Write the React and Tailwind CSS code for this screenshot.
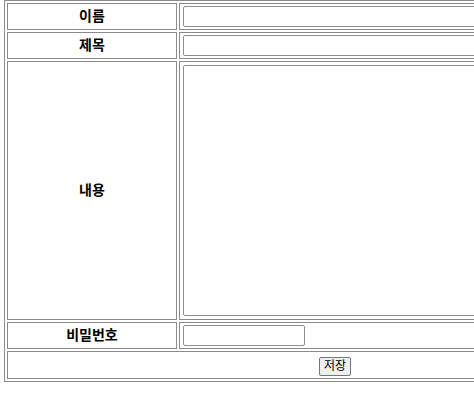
import React from 'react';

const font = { fontFamily: '"Liberation Sans", "Noto Sans CJK KR", sans-serif' };

const Label = ({ children, className = '' }) => (
  <td className={`w-[170px] border border-[#8a8a8a] p-[1px] text-center text-[14px] font-bold text-black ${className}`}>
    {children}
  </td>
);

const App = () => {
  return (
    <div className="bg-white min-h-[409px]" style={font}>
      <form>
        <table className="ml-[4px] w-[662px] border border-[#8a8a8a] border-separate border-spacing-[2px]">
          <tbody>
            <tr className="h-[27px]">
              <Label>이름</Label>
              <td className="border border-[#8a8a8a] px-[3px] py-[1px]">
                <input type="text" className="block w-full h-[21px] border border-[#8f8f8f] rounded-[2px] px-[2px] text-[13px]" />
              </td>
            </tr>
            <tr className="h-[27px]">
              <Label>제목</Label>
              <td className="border border-[#8a8a8a] px-[3px] py-[1px]">
                <input type="text" className="block w-full h-[21px] border border-[#8f8f8f] rounded-[2px] px-[2px] text-[13px]" />
              </td>
            </tr>
            <tr className="h-[259px]">
              <Label>내용</Label>
              <td className="border border-[#8a8a8a] px-[3px] py-[1px]">
                <textarea className="block w-full h-[251px] resize-none border border-[#8f8f8f] rounded-[2px] text-[13px]" />
              </td>
            </tr>
            <tr className="h-[27px]">
              <Label>비밀번호</Label>
              <td className="border border-[#8a8a8a] px-[3px] py-[1px]">
                <input type="password" className="block w-[122px] h-[21px] border border-[#8f8f8f] rounded-[2px] px-[2px] text-[13px]" />
              </td>
            </tr>
            <tr className="h-[28px]">
              <td colSpan={2} className="border border-[#8a8a8a] p-[1px] text-center">
                <button type="button" className="h-[19px] px-[4px] bg-[#efefef] border border-[#767676] rounded-[2px] text-[12px] leading-none text-black">
                  저장
                </button>
              </td>
            </tr>
          </tbody>
        </table>
      </form>
    </div>
  );
};

export default App;
